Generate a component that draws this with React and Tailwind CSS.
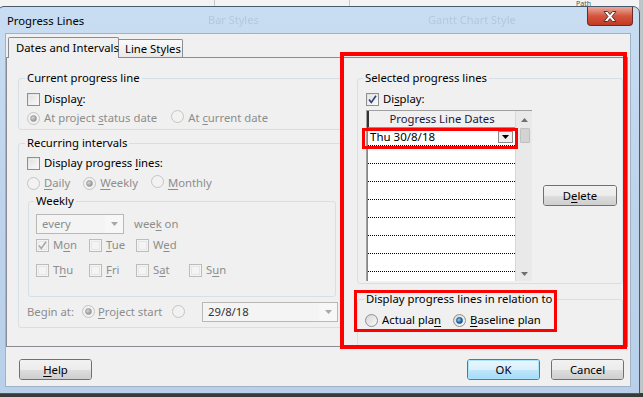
import React from "react";

const FONT = "font-['Noto_Sans',sans-serif]";

function U({ children }) {
  return <span className="underline decoration-1 underline-offset-[2px]">{children}</span>;
}

function Check({ checked, disabled }) {
  return (
    <span
      className={
        "relative inline-flex w-[13px] h-[13px] shrink-0 border items-center justify-center " +
        (disabled
          ? "border-[#bcbcbc] bg-[#f4f4f4]"
          : "border-[#8e8f8f] bg-gradient-to-br from-[#dedede] to-[#fbfbfb]")
      }
    >
      <span className={"absolute inset-[1px] border " + (disabled ? "border-[#e6e6e6]" : "border-[#f4f4f4]/60")} />
      {checked && (
        <svg width="11" height="11" viewBox="0 0 11 11" className="relative">
          <path
            d="M2 5.5 L4.3 8.5 L9 1.8"
            fill="none"
            stroke={disabled ? "#a8a8a8" : "#2a3f73"}
            strokeWidth="1.6"
          />
        </svg>
      )}
    </span>
  );
}

function Radio({ selected, disabled, blue }) {
  return (
    <span
      className={
        "relative inline-flex w-[13px] h-[13px] shrink-0 rounded-full border items-center justify-center " +
        (disabled
          ? "border-[#c4c4c4] bg-[#f2f2f2]"
          : "border-[#8e8f8f] bg-gradient-to-br from-[#d6d6d6] to-[#fafafa]")
      }
    >
      {selected && (
        <span
          className={
            "w-[7px] h-[7px] rounded-full " +
            (blue
              ? "bg-[radial-gradient(circle_at_35%_35%,#8fd0ff,#1c6fb8_60%,#0c3e74)] border border-[#1b4f83]"
              : "bg-[radial-gradient(circle_at_35%_35%,#d8d8d8,#9a9a9a_70%)] border border-[#a2a2a2]")
          }
        />
      )}
    </span>
  );
}

function Btn({ children, def, className = "" }) {
  return (
    <div
      className={
        "h-[21px] rounded-[3px] border flex items-center justify-center text-[11.3px] text-black relative overflow-hidden " +
        (def ? "border-[#3c7fb1]" : "border-[#707070]") +
        " " +
        className
      }
    >
      <div className="absolute inset-0 flex flex-col">
        <div className={"flex-1 " + (def ? "bg-gradient-to-b from-[#eaf6fd] to-[#d9f0fc]" : "bg-gradient-to-b from-[#f2f2f2] to-[#ebebeb]")} />
        <div className={"flex-1 " + (def ? "bg-gradient-to-b from-[#bee6fd] to-[#a7d9f5]" : "bg-gradient-to-b from-[#dddddd] to-[#cfcfcf]")} />
      </div>
      {def && <div className="absolute inset-0 rounded-[2px] border border-[#a8e4fa]" />}
      <span className="relative leading-[16px]">{children}</span>
    </div>
  );
}

function Group({ label, legendMl = "ml-[6px]", className = "", children }) {
  return (
    <fieldset className={"border border-[#d5dfe5] rounded-[3px] m-0 p-0 min-w-0 " + className}>
      <legend className={"px-[2px] text-[11.3px] leading-[16px] text-black whitespace-nowrap " + legendMl}>{label}</legend>
      {children}
    </fieldset>
  );
}

const DIS = "text-[#8d8d8d]";

function Combo({ text, className = "", textClass = "" }) {
  return (
    <div className={"h-[20px] border border-[#b8b8b8] bg-[#f7f7f7] flex items-center " + className}>
      <div className="flex-1 h-full bg-[#f4f4f4] flex items-center pl-[5px]">
        <span className={"text-[11.3px] leading-[16px] " + textClass}>{text}</span>
      </div>
      <div className="w-[18px] h-full flex items-center justify-center bg-[#f7f7f7]">
        <svg width="7" height="4" viewBox="0 0 7 4">
          <path d="M0 0 H7 L3.5 4 Z" fill="#a8a8a8" />
        </svg>
      </div>
    </div>
  );
}

export default function App() {
  const dayCols = ["w-[53px]", "w-[47px]", "w-[53px]", "w-[53px]"];
  return (
    <div className={"relative w-[643px] h-[397px] overflow-hidden bg-[#e4e6ea] whitespace-nowrap " + FONT}>
      {/* backdrop (application behind the dialog) */}
      <div className="absolute left-0 top-0 w-[643px] h-[7px] bg-[#f3f3f3] flex items-start">
        <div className="w-[215px] h-[7px] border-r border-[#c8c8c8]" />
        <div className="w-[135px] h-[7px] border-r border-[#c8c8c8]" />
        <div className="ml-[226px] text-[7px] leading-[7px] text-[#555]">Path</div>
      </div>
      <div className="absolute right-0 top-0 w-[4px] h-[397px] bg-[#bfc4c9]" />
      <div className="absolute left-0 bottom-0 w-[643px] h-[4px] bg-[#3a3a3a]" />

      {/* Dialog window */}
      <div className="absolute left-[-3px] top-[6px] w-[643px] h-[388px] rounded-t-[7px] border border-[#4a5a6e] bg-gradient-to-b from-[#c9ddf2] via-[#bed4ec] to-[#b9d0ea] flex flex-col">
        {/* title bar */}
        <div className="h-[26px] flex items-start relative shrink-0">
          <span className="ml-[9px] mt-[6px] text-[11.3px] leading-[16px] text-black">Progress Lines</span>
          <span className="absolute left-[210px] top-[5px] text-[11px] text-[#9fb3c8] opacity-50 blur-[0.6px]">Bar Styles</span>
          <span className="absolute left-[430px] top-[5px] text-[11px] text-[#9fb3c8] opacity-50 blur-[0.6px]">Gantt Chart Style</span>
          <div className="absolute left-[589px] top-0 w-[46px] h-[19px] rounded-b-[4px] border border-[#6b2a22] border-t-0 bg-gradient-to-b from-[#e9a99c] via-[#d4553f] to-[#c23a22] flex items-center justify-center">
            <svg width="14" height="11" viewBox="0 0 14 11">
              <path
                d="M1 0.5 H4.5 L7 3.5 L9.5 0.5 H13 L9 5.5 L13 10.5 H9.5 L7 7.5 L4.5 10.5 H1 L5 5.5 Z"
                fill="#ffffff"
                stroke="#3a2a2a"
                strokeWidth="0.9"
                strokeLinejoin="round"
              />
            </svg>
          </div>
        </div>

        {/* client area */}
        <div className="ml-[7px] mr-[8px] h-[354px] bg-[#f0f0f0] border border-[#9fb2c8] flex flex-col">
          {/* tabs */}
          <div className="flex items-end ml-[2px] mt-[3px] h-[20px] relative z-10">
            <div className="w-[111px] h-[21px] border border-[#898c95] border-b-0 bg-[#f0f0f0] rounded-t-[2px] flex items-center pl-[7px] text-[11.3px] leading-[16px] -mb-[1px]">
              Dates and Intervals
            </div>
            <div className="w-[64px] h-[18px] border border-[#898c95] border-b-0 border-l-0 bg-gradient-to-b from-[#fafafa] to-[#e9e9e9] rounded-tr-[2px] flex items-center pl-[6px] text-[11.3px] leading-[16px]">
              Line Styles
            </div>
          </div>

          {/* tab panel */}
          <div className="ml-[0px] mr-[2px] h-[290px] border border-[#898c95] bg-[#f0f0f0] flex">
            {/* left column */}
            <div className="ml-[11px] mt-[12px] w-[324px] flex flex-col">
              <Group label="Current progress line">
                <div className="pt-[5px] pb-[3px] pl-[8px] flex flex-col gap-[3px] text-[11.3px] leading-[16px]">
                  <div className="h-[16px] flex items-center gap-[4px]">
                    <Check />
                    <span>
                      Displa<U>y</U>:
                    </span>
                  </div>
                  <div className={"h-[16px] flex items-center " + DIS}>
                    <Radio selected disabled />
                    <span className="ml-[4px]">
                      At project <U>s</U>tatus date
                    </span>
                    <span className="ml-[14px]">
                      <Radio disabled />
                    </span>
                    <span className="ml-[4px]">
                      At <U>c</U>urrent date
                    </span>
                  </div>
                </div>
              </Group>

              <Group label="Recurring intervals" className="mt-[5px]">
                <div className="pt-[4px] pb-[6px] flex flex-col text-[11.3px] leading-[16px]">
                  <div className="pl-[8px] h-[16px] flex items-center gap-[4px]">
                    <Check />
                    <span>
                      Display progress <U>l</U>ines:
                    </span>
                  </div>
                  <div className={"pl-[8px] mt-[4px] h-[16px] flex items-center " + DIS}>
                    <Radio disabled />
                    <span className="ml-[4px]">
                      <U>D</U>aily
                    </span>
                    <span className="ml-[13px]">
                      <Radio selected disabled />
                    </span>
                    <span className="ml-[4px]">
                      <U>W</U>eekly
                    </span>
                    <span className="ml-[13px]">
                      <Radio disabled />
                    </span>
                    <span className="ml-[4px]">
                      <U>M</U>onthly
                    </span>
                  </div>

                  <Group label="Weekly" className="mt-[2px] ml-[9px] w-[308px]" legendMl="ml-[5px]">
                    <div className="pt-[5px] pb-[18px] pl-[7px] flex flex-col">
                      <div className="flex items-center">
                        <Combo text="every" className="w-[88px]" textClass={DIS} />
                        <span className={"ml-[10px] " + DIS}>
                          wee<U>k</U> on
                        </span>
                      </div>
                      <div className={"mt-[3px] h-[16px] flex items-center " + DIS}>
                        {[
                          [true, <>M<U>o</U>n</>],
                          [false, <><U>T</U>ue</>],
                          [false, <>W<U>e</U>d</>],
                        ].map(([c, l], i) => (
                          <div key={i} className={"flex items-center gap-[4px] " + dayCols[i]}>
                            <Check checked={c} disabled />
                            <span>{l}</span>
                          </div>
                        ))}
                      </div>
                      <div className={"mt-[9px] h-[16px] flex items-center " + DIS}>
                        {[
                          <>T<U>h</U>u</>,
                          <><U>F</U>ri</>,
                          <>S<U>a</U>t</>,
                          <>S<U>u</U>n</>,
                        ].map((l, i) => (
                          <div key={i} className={"flex items-center gap-[4px] " + dayCols[i]}>
                            <Check disabled />
                            <span>{l}</span>
                          </div>
                        ))}
                      </div>
                    </div>
                  </Group>

                  <div className={"pl-[8px] mt-[5px] h-[19px] flex items-center " + DIS}>
                    <span className="w-[55px]">Begin at:</span>
                    <Radio selected disabled />
                    <span className="ml-[3px] w-[74px]">
                      <U>P</U>roject start
                    </span>
                    <Radio disabled />
                    <Combo text="29/8/18" className="ml-[17px] w-[136px] h-[19px]" textClass="text-[#333]" />
                  </div>
                </div>
              </Group>
            </div>

            {/* right column */}
            <div className="ml-[15px] mt-[12px] w-[266px] flex flex-col">
              <Group label="Selected progress lines" legendMl="ml-[5px]">
                <div className="pt-[5px] pb-[2px] pl-[8px] flex flex-col text-[11.3px] leading-[16px]">
                  <div className="h-[16px] flex items-center gap-[4px]">
                    <Check checked />
                    <span>
                      Di<U>s</U>play:
                    </span>
                  </div>
                  <div className="mt-[3px] flex items-start">
                    {/* grid */}
                    <div className="w-[166px] h-[171px] border-l border-t border-[#a0a0a0] flex overflow-hidden">
                      <div className="w-[149px] flex flex-col">
                        <div className="h-[17px] shrink-0 border-l-2 border-[#333] border-b border-b-[#7aa57a] bg-[#f0f0f0] flex items-center justify-center text-[11.3px] text-[#1a1a3a]">
                          Progress Line Dates
                        </div>
                        <div className="flex-1 bg-white border-l border-[#6a9a6a] flex flex-col">
                          <div className="h-[18px] shrink-0 border-b border-dotted border-black flex items-center pl-[2px] pr-[2px]">
                            <span className="text-[11.5px] text-black">Thu 30/8/18</span>
                            <div className="ml-auto w-[15px] h-[12px] border border-[#8a8a8a] bg-[#f0f0f0] flex items-center justify-center">
                              <svg width="7" height="4" viewBox="0 0 7 4">
                                <path d="M0 0 H7 L3.5 4 Z" fill="#000" />
                              </svg>
                            </div>
                          </div>
                          {Array.from({ length: 8 }).map((_, i) => (
                            <div key={i} className="h-[18px] shrink-0 border-b border-dotted border-black" />
                          ))}
                        </div>
                      </div>
                      <div className="w-[17px] bg-[#e9e9e9] border-l border-[#d8d8d8] flex flex-col items-center">
                        <div className="h-[17px] flex items-center justify-center">
                          <svg width="7" height="4" viewBox="0 0 7 4">
                            <path d="M0 4 H7 L3.5 0 Z" fill="#707070" />
                          </svg>
                        </div>
                        <div className="w-[10px] h-[15px] ml-[2px] bg-[#d3d3d3] border border-[#c0c0c0] rounded-[1px]" />
                        <div className="flex-1" />
                        <div className="h-[14px] flex items-center justify-center">
                          <svg width="7" height="4" viewBox="0 0 7 4">
                            <path d="M0 0 H7 L3.5 4 Z" fill="#707070" />
                          </svg>
                        </div>
                      </div>
                    </div>
                    <Btn className="ml-[11px] mt-[75px] w-[74px]">
                      D<U>e</U>lete
                    </Btn>
                  </div>
                </div>
              </Group>

              <Group label="Display progress lines in relation to" legendMl="ml-[6px]" className="mt-[7px]">
                <div className="pt-[5px] pb-[3px] pl-[7px] h-[40px] flex items-start text-[11.3px] leading-[16px]">
                  <div className="h-[16px] flex items-center">
                    <Radio />
                    <span className="ml-[4px]">
                      Actual pla<U>n</U>
                    </span>
                    <span className="ml-[12px]">
                      <Radio selected blue />
                    </span>
                    <span className="ml-[4px]">
                      <U>B</U>aseline plan
                    </span>
                  </div>
                </div>
              </Group>
            </div>
          </div>

          {/* bottom buttons */}
          <div className="mt-[12px] flex items-center text-[11.3px]">
            <Btn className="ml-[13px] w-[73px]">
              <U>H</U>elp
            </Btn>
            <div className="flex-1" />
            <Btn def className="w-[73px]">OK</Btn>
            <Btn className="ml-[11px] mr-[6px] w-[73px]">Cancel</Btn>
          </div>
        </div>
      </div>

      {/* red annotation boxes */}
      <div className="absolute left-[340px] top-[52px] w-[287px] h-[297px] border-[4px] border-[#ff0000] pointer-events-none" />
      <div className="absolute left-[362px] top-[128px] w-[156px] h-[21px] border-[3px] border-[#ff0000] pointer-events-none" />
      <div className="absolute left-[354px] top-[290px] w-[203px] h-[42px] border-[3px] border-[#ff0000] pointer-events-none" />
    </div>
  );
}
